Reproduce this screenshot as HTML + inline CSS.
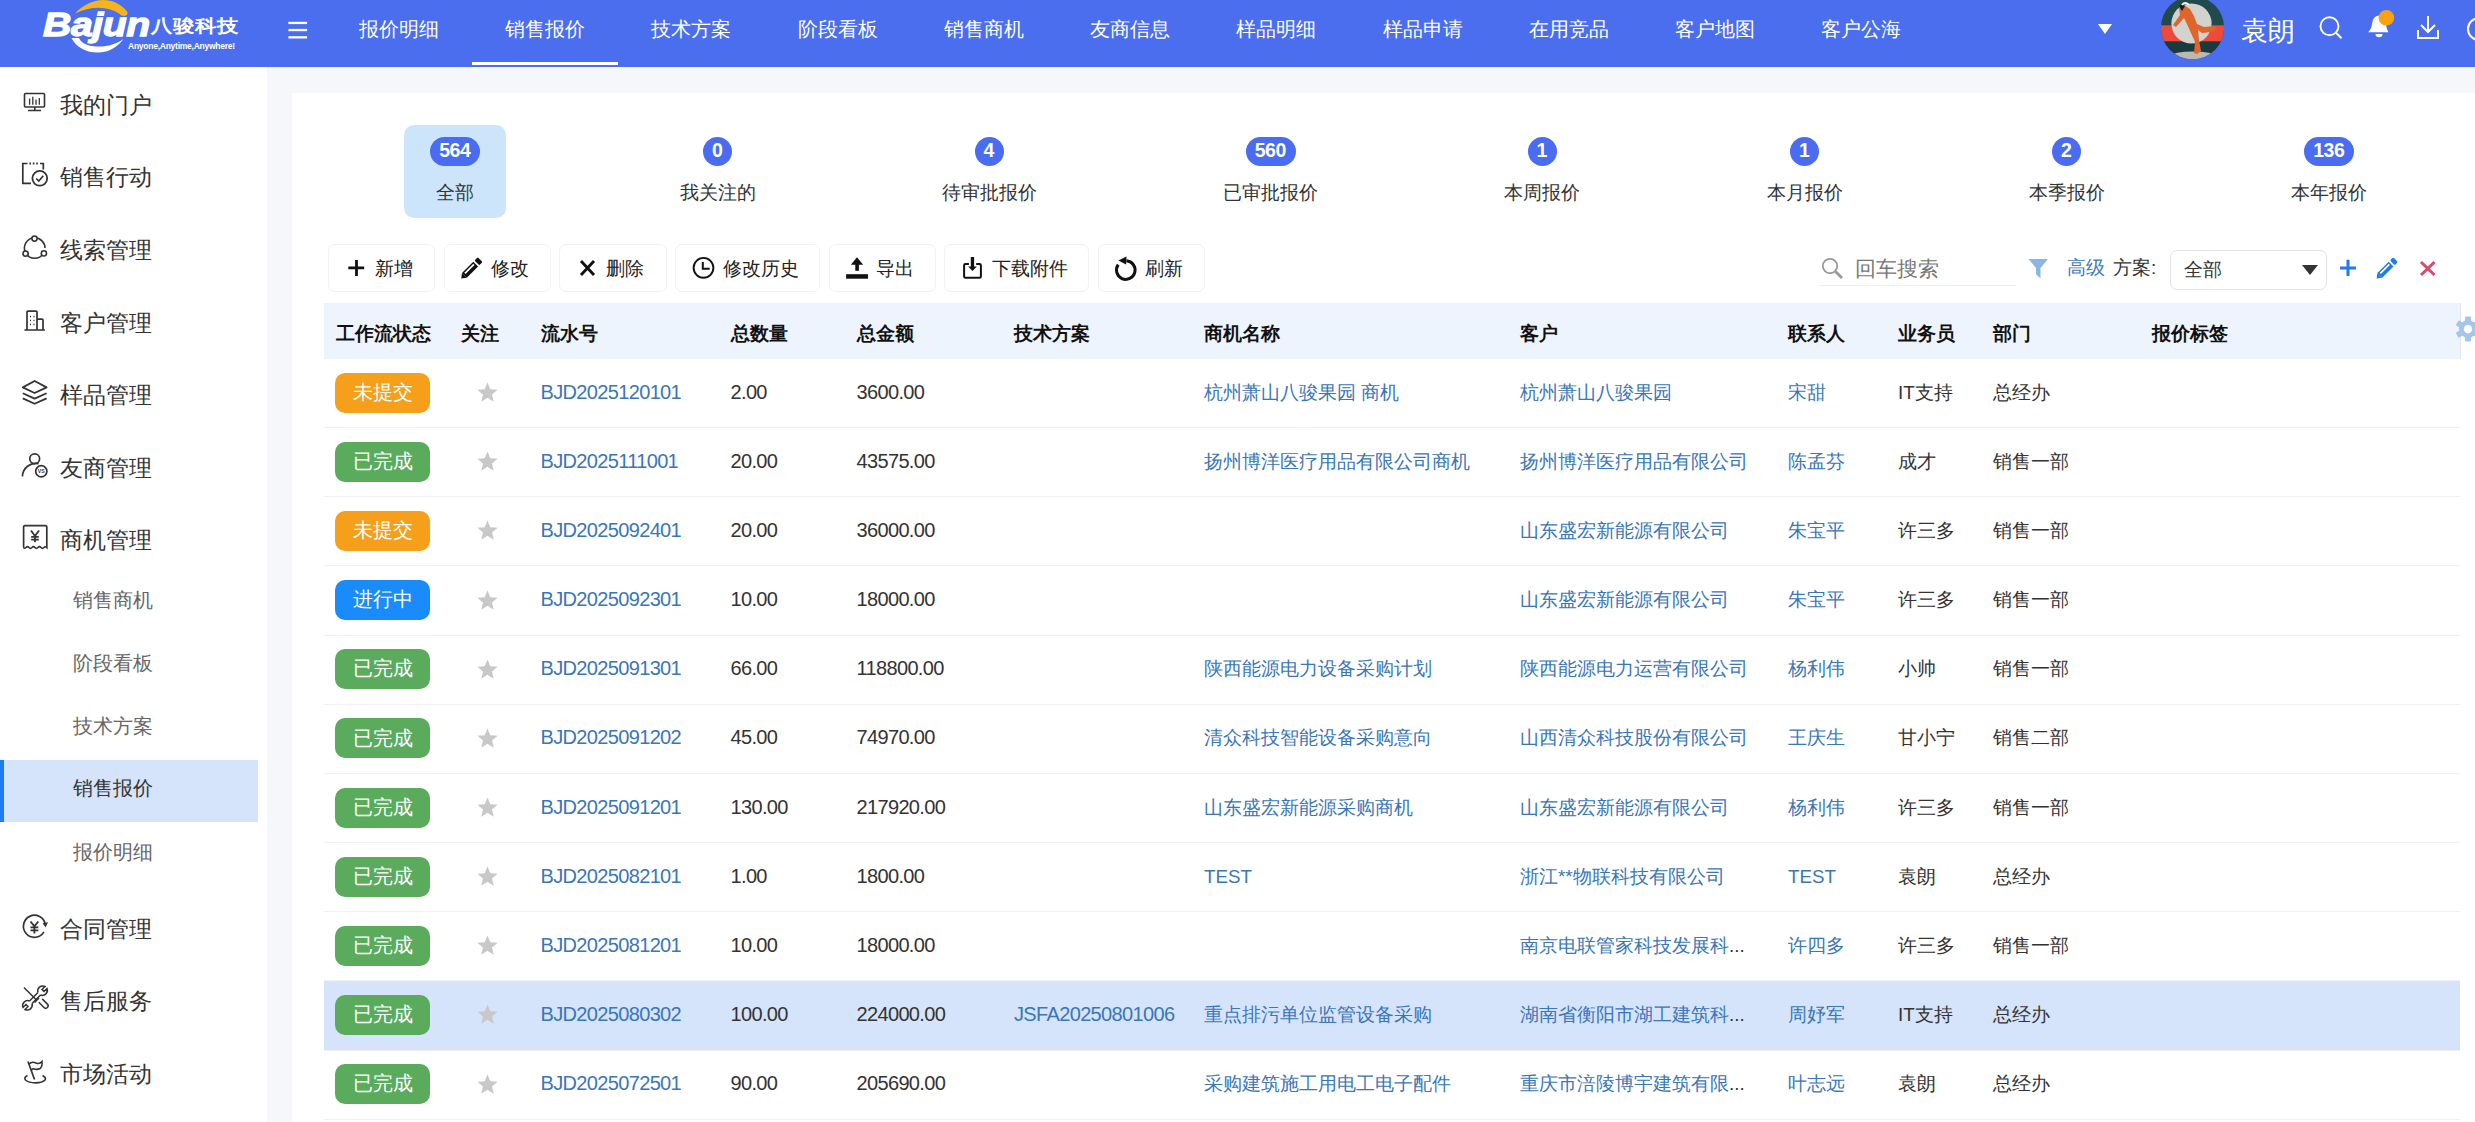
<!DOCTYPE html>
<html><head><meta charset="utf-8"><style>
*{margin:0;padding:0;box-sizing:border-box}
html,body{width:2475px;height:1122px;overflow:hidden;background:#f5f7fb;font-family:"Liberation Sans",sans-serif;color:#333}
.t{position:absolute;white-space:nowrap}
svg{position:absolute;overflow:visible}
</style></head><body>
<div class="t" style="left:0px;top:0px;width:2475px;height:67px;background:#4b6eee;"></div>
<div class="t" style="left:0px;top:67px;width:267px;height:1055px;background:#fff;"></div>
<div class="t" style="left:292px;top:93px;width:2183px;height:1029px;background:#fff;"></div>
<svg style="left:0;top:0" width="260" height="66" viewBox="0 0 260 66">
  <path d="M75 13.5 C88 -1 112 -7 127.5 12 Q128 15.5 124.5 16 Q121 16 119 13.5 C108 6.5 92 5 75 13.5 Z" fill="#f6b416"/>
  <path d="M71.5 38 C77 50 93 55 106 51.5 C113 49.5 119 45 123.5 39 C116 44 107 47 97 46.5 C87 46 81 43 79 38 Z" fill="#fff"/>
</svg>
<div class="t" id="bajun" style="left:43px;top:2px;font:italic bold 34px/44px 'Liberation Sans',sans-serif;color:#fff;-webkit-text-stroke:1.3px #fff;letter-spacing:-0.3px;transform:scaleX(1.15);transform-origin:0 0">Bajun</div>
<div class="t" style="left:151px;top:13px;font-weight:bold;font-size:21px;line-height:26px;color:#fff;transform:scale(1.04,0.88);transform-origin:0 50%">八骏科技</div>
<div class="t" style="left:128px;top:41px;font-size:8.5px;line-height:10px;color:#fff;font-weight:bold;letter-spacing:-0.25px">Anyone,Anytime,Anywhere!</div>
<svg style="left:0;top:0" width="1" height="1"><rect x="288.4" y="21.8" width="18.7" height="2.3" fill="#fff"/><rect x="288.4" y="28.9" width="18.7" height="2.3" fill="#fff"/><rect x="288.4" y="36.2" width="18.7" height="2.3" fill="#fff"/></svg>
<div class="t" style="left:325.8px;width:146px;text-align:center;top:15.0px;height:28px;line-height:28px;font-size:19.8px;color:#fff;font-weight:normal;">报价明细</div>
<div class="t" style="left:472.0px;width:146px;text-align:center;top:15.0px;height:28px;line-height:28px;font-size:19.8px;color:#fff;font-weight:normal;">销售报价</div>
<div class="t" style="left:618.3px;width:146px;text-align:center;top:15.0px;height:28px;line-height:28px;font-size:19.8px;color:#fff;font-weight:normal;">技术方案</div>
<div class="t" style="left:764.5px;width:146px;text-align:center;top:15.0px;height:28px;line-height:28px;font-size:19.8px;color:#fff;font-weight:normal;">阶段看板</div>
<div class="t" style="left:910.8px;width:146px;text-align:center;top:15.0px;height:28px;line-height:28px;font-size:19.8px;color:#fff;font-weight:normal;">销售商机</div>
<div class="t" style="left:1057.0px;width:146px;text-align:center;top:15.0px;height:28px;line-height:28px;font-size:19.8px;color:#fff;font-weight:normal;">友商信息</div>
<div class="t" style="left:1203.3px;width:146px;text-align:center;top:15.0px;height:28px;line-height:28px;font-size:19.8px;color:#fff;font-weight:normal;">样品明细</div>
<div class="t" style="left:1349.5px;width:146px;text-align:center;top:15.0px;height:28px;line-height:28px;font-size:19.8px;color:#fff;font-weight:normal;">样品申请</div>
<div class="t" style="left:1495.8px;width:146px;text-align:center;top:15.0px;height:28px;line-height:28px;font-size:19.8px;color:#fff;font-weight:normal;">在用竞品</div>
<div class="t" style="left:1642.0px;width:146px;text-align:center;top:15.0px;height:28px;line-height:28px;font-size:19.8px;color:#fff;font-weight:normal;">客户地图</div>
<div class="t" style="left:1788.3px;width:146px;text-align:center;top:15.0px;height:28px;line-height:28px;font-size:19.8px;color:#fff;font-weight:normal;">客户公海</div>
<div class="t" style="left:472px;top:62px;width:146px;height:3px;background:#fff;"></div>
<svg style="left:2096px;top:22px" width="18" height="14"><path d="M2 2 L16 2 L9 12 Z" fill="#fff"/></svg>
<svg style="left:2160px;top:-4px" width="66" height="66" viewBox="0 0 66 66">
  <defs><clipPath id="av"><circle cx="32.5" cy="31.7" r="31.6"/></clipPath></defs>
  <g clip-path="url(#av)">
    <rect x="0" y="0" width="66" height="66" fill="#214a4c"/>
    <rect x="0" y="45" width="66" height="21" fill="#1a3a3e"/>
    <rect x="0" y="29.3" width="66" height="16" fill="#ec4a3b"/>
    <circle cx="31.5" cy="27.5" r="20.1" fill="#d2d2cf"/>
    <ellipse cx="33" cy="60" rx="22" ry="4.5" fill="#b9b9b6"/>
    <path d="M19 12 L24 9 L30 13 L34 20 L37 28 L44 31 L55 30 L57 33 L52 36 L42 37 L38 34 L39 44 L41 55 L37 58 L34 57 L35 46 L31 37 L27 28 L24 22 L16 31 L13 29 L20 19 Z" fill="#e0652a"/>
    <path d="M19 10 Q22 7 25 10 L22 15 Z" fill="#1a1a1a"/>
    <path d="M22 9 Q25 5 29 9" stroke="#eee" stroke-width="2" fill="none"/>
  </g>
</svg>
<div class="t" style="left:2241px;top:12.0px;height:38px;line-height:38px;font-size:27px;color:#fff;font-weight:normal;">袁朗</div>
<svg style="left:0;top:0" width="1" height="1">
  <circle cx="2329.5" cy="26.2" r="9" stroke="#fff" stroke-width="1.9" fill="none"/>
  <path d="M2336 32.7 L2341.5 38.2" stroke="#fff" stroke-width="2"/>
  <path d="M2368 32.3 Q2371.5 29 2372 24 Q2372.5 16 2379 15.5 Q2385.5 16 2386 24 Q2386.5 29 2388.5 32.3 Z" fill="#fff"/>
  <path d="M2375.5 34 H2382.5 Q2382.5 37.3 2379 37.3 Q2375.5 37.3 2375.5 34Z" fill="#fff"/>
  <circle cx="2386.4" cy="17.8" r="7.8" fill="#f7a30f"/>
  <path d="M2428 16 V32 M2421 25 L2428 32 L2435 25" stroke="#fff" stroke-width="2" fill="none"/>
  <path d="M2418 30 V38 H2438 V30" stroke="#fff" stroke-width="2" fill="none"/>
  <circle cx="2479" cy="29" r="11" stroke="#fff" stroke-width="2" fill="none"/>
</svg>
<div class="t" style="left:0px;top:760px;width:258px;height:62px;background:#d5e4fb;"></div>
<div class="t" style="left:0px;top:760px;width:4px;height:62px;background:#1f7bf6;"></div>
<div class="t" style="left:60px;top:90.0px;height:32px;line-height:32px;font-size:22.6px;color:#333;font-weight:normal;">我的门户</div>
<div class="t" style="left:60px;top:162.0px;height:32px;line-height:32px;font-size:22.6px;color:#333;font-weight:normal;">销售行动</div>
<div class="t" style="left:60px;top:235.0px;height:32px;line-height:32px;font-size:22.6px;color:#333;font-weight:normal;">线索管理</div>
<div class="t" style="left:60px;top:308.0px;height:32px;line-height:32px;font-size:22.6px;color:#333;font-weight:normal;">客户管理</div>
<div class="t" style="left:60px;top:380.0px;height:32px;line-height:32px;font-size:22.6px;color:#333;font-weight:normal;">样品管理</div>
<div class="t" style="left:60px;top:453.0px;height:32px;line-height:32px;font-size:22.6px;color:#333;font-weight:normal;">友商管理</div>
<div class="t" style="left:60px;top:525.0px;height:32px;line-height:32px;font-size:22.6px;color:#333;font-weight:normal;">商机管理</div>
<div class="t" style="left:60px;top:914.0px;height:32px;line-height:32px;font-size:22.6px;color:#333;font-weight:normal;">合同管理</div>
<div class="t" style="left:60px;top:986.0px;height:32px;line-height:32px;font-size:22.6px;color:#333;font-weight:normal;">售后服务</div>
<div class="t" style="left:60px;top:1059.0px;height:32px;line-height:32px;font-size:22.6px;color:#333;font-weight:normal;">市场活动</div>
<div class="t" style="left:73px;top:586.0px;height:28px;line-height:28px;font-size:20px;color:#666;font-weight:normal;">销售商机</div>
<div class="t" style="left:73px;top:649.0px;height:28px;line-height:28px;font-size:20px;color:#666;font-weight:normal;">阶段看板</div>
<div class="t" style="left:73px;top:712.0px;height:28px;line-height:28px;font-size:20px;color:#666;font-weight:normal;">技术方案</div>
<div class="t" style="left:73px;top:774.0px;height:28px;line-height:28px;font-size:20px;color:#333;font-weight:normal;">销售报价</div>
<div class="t" style="left:73px;top:838.0px;height:28px;line-height:28px;font-size:20px;color:#666;font-weight:normal;">报价明细</div>
<svg style="left:0;top:0" width="60" height="1122" viewBox="0 0 60 1122" fill="none" stroke="#333" stroke-width="1.6">
  <rect x="24.5" y="93.5" width="20" height="13.5" rx="1"/>
  <path d="M28 110.5 H41 M34.8 107 V110.5"/><path d="M29.6 104.7 V98.5 M32.8 104.7 V96.8 M36 104.7 V99.5 M39.3 104.7 V98" stroke-width="1.3"/>
  <path d="M27.5 163.5 H22.8 V183.3 H31 M40 163.5 H43.3 V169.5" stroke-width="1.7"/>
  <path d="M30.2 162.6 V164.4 M33.6 162.6 V164.4 M37 162.6 V164.4" stroke-width="1.6"/>
  <circle cx="39.8" cy="178.3" r="7.4" stroke-width="1.8"/>
  <path d="M36.2 178.5 L38.8 181 L43.3 175.8" stroke-width="1.7"/>
  <path d="M34.7 237.8 A10.3 10.3 0 0 0 25.8 253.2 A10.3 10.3 0 0 0 43.6 253.2 M45 248.1 A10.3 10.3 0 0 0 34.7 237.8"/>
  <circle cx="34.5" cy="238.6" r="2.6" fill="#fff"/><circle cx="25.6" cy="253.6" r="2.6" fill="#fff"/><circle cx="43.9" cy="253.4" r="2.6" fill="#fff"/>
  <path d="M24.4 330 H45 M27 330 V312 Q27 311.2 28 311.2 H36 Q37 311.2 37 312 V330 M37 319.2 H42 Q43 319.2 43 320 V330" stroke-width="1.7"/>
  <path d="M30 316.5 h1 M33.5 316.5 h1 M30 320.5 h1 M33.5 320.5 h1 M30 324.5 h1 M33.5 324.5 h1" stroke-width="1.7"/>
  <path d="M34.6 381 L46.6 387.4 L34.6 393 L22.8 387.4 Z" stroke-width="1.8" stroke-linejoin="round"/>
  <path d="M22.8 393.2 L34.6 398.6 L46.6 393.2 M22.8 398.4 L34.6 403.8 L46.6 398.4" stroke-width="1.8" stroke-linejoin="round"/>
  <circle cx="34.7" cy="458.7" r="4.9" stroke-width="1.7"/>
  <path d="M22.4 476.4 A13.5 13.5 0 0 1 38.6 463.6" stroke-width="1.7"/>
  <circle cx="41.3" cy="471.3" r="5.6" stroke-width="1.7" fill="#fff"/>
  <text x="41.3" y="473.2" font-size="5.2" font-weight="bold" text-anchor="middle" fill="#333" stroke="none" font-family="Liberation Sans">VS</text>
  <path d="M23.6 547.5 V527 Q23.6 525.6 25 525.6 H45.4 Q46.8 525.6 46.8 527 V547.5 Q45.5 546 44 547.5 Q42.5 549 41 547.5 Q39.5 546 38 547.5 Q36.5 549 35 547.5 Q33.5 546 32 547.5 Q30.5 549 29 547.5 Q27.5 546 26 547.5 Q24.5 549 23.6 547.5" stroke-width="1.7"/>
  <path d="M31 530.5 L35 536 L39 530.5 M35 536 V542.2 M31.2 536.8 H38.8 M31.2 539.6 H38.8" stroke-width="1.8"/>
  <path d="M43.9 931.9 A11 11 0 1 1 45.3 924.6" stroke-width="1.7"/>
  <path d="M42.6 923.2 L48 922.3 L45.6 927.4 Z" fill="#333" stroke="none"/>
  <path d="M30.5 921.5 L34.4 926.3 L38.3 921.5 M34.4 926.3 V933.5 M30.5 927.3 H38.3 M30.5 930.3 H38.3" stroke-width="1.8"/>
  <path d="M24 987.5 L36.5 1000" stroke-width="1.5"/>
  <path d="M34.5 1002.5 L39 998"/>
  <path d="M38.8 1002.3 L44 1007.5 A2.4 2.4 0 0 0 47.4 1004.1 L42.2 998.9" stroke-width="1.5"/>
  <path d="M40.5 995 L32 1003.5 M38 992.5 L29.5 1001 M40.5 995 A5 5 0 0 0 47 988.5 L44 991.5 L42 989.5 L45 986.5 A5 5 0 0 0 38 992.5 M29.5 1001 A5 5 0 0 0 23 1007.5 L26 1004.5 L28 1006.5 L25 1009.5 A5 5 0 0 0 32 1003.5" stroke-width="1.5"/>
  <path d="M28 1061.5 L34.5 1079.5" stroke-width="1.7"/>
  <path d="M29 1064 Q32 1061 36 1063 Q39.5 1064.5 42 1061.5 Q42.5 1067 40 1068.5 Q37 1070 34 1069 Q32 1068.5 31.5 1070.5" stroke-width="1.6"/>
  <path d="M27.5 1075.5 Q23.5 1077.5 25.5 1080 Q28.5 1082.8 35.5 1082.8 Q42.5 1082.8 45 1080 Q46.5 1077.5 42.5 1075.5" stroke-width="1.7"/>
</svg>
<div class="t" style="left:404px;top:125px;width:102px;height:93px;background:#cce5fb;border-radius:10px"></div>
<div class="t" style="left:430.0px;top:137px;width:50px;height:29px;border-radius:15px;background:#4a6cf0;color:#fff;font-weight:bold;font-size:19.5px;line-height:27px;letter-spacing:-0.5px;text-indent:-0.5px;text-align:center">564</div>
<div class="t" style="left:305.0px;width:300px;text-align:center;top:178.5px;height:27px;line-height:27px;font-size:19.2px;color:#333;font-weight:normal;">全部</div>
<div class="t" style="left:703.0px;top:137px;width:29px;height:29px;border-radius:15px;background:#4a6cf0;color:#fff;font-weight:bold;font-size:19.5px;line-height:27px;letter-spacing:-0.5px;text-indent:-0.5px;text-align:center">0</div>
<div class="t" style="left:567.5px;width:300px;text-align:center;top:178.5px;height:27px;line-height:27px;font-size:19.2px;color:#333;font-weight:normal;">我关注的</div>
<div class="t" style="left:974.5px;top:137px;width:29px;height:29px;border-radius:15px;background:#4a6cf0;color:#fff;font-weight:bold;font-size:19.5px;line-height:27px;letter-spacing:-0.5px;text-indent:-0.5px;text-align:center">4</div>
<div class="t" style="left:839.0px;width:300px;text-align:center;top:178.5px;height:27px;line-height:27px;font-size:19.2px;color:#333;font-weight:normal;">待审批报价</div>
<div class="t" style="left:1245.5px;top:137px;width:50px;height:29px;border-radius:15px;background:#4a6cf0;color:#fff;font-weight:bold;font-size:19.5px;line-height:27px;letter-spacing:-0.5px;text-indent:-0.5px;text-align:center">560</div>
<div class="t" style="left:1120.5px;width:300px;text-align:center;top:178.5px;height:27px;line-height:27px;font-size:19.2px;color:#333;font-weight:normal;">已审批报价</div>
<div class="t" style="left:1527.5px;top:137px;width:29px;height:29px;border-radius:15px;background:#4a6cf0;color:#fff;font-weight:bold;font-size:19.5px;line-height:27px;letter-spacing:-0.5px;text-indent:-0.5px;text-align:center">1</div>
<div class="t" style="left:1392.0px;width:300px;text-align:center;top:178.5px;height:27px;line-height:27px;font-size:19.2px;color:#333;font-weight:normal;">本周报价</div>
<div class="t" style="left:1790.0px;top:137px;width:29px;height:29px;border-radius:15px;background:#4a6cf0;color:#fff;font-weight:bold;font-size:19.5px;line-height:27px;letter-spacing:-0.5px;text-indent:-0.5px;text-align:center">1</div>
<div class="t" style="left:1654.5px;width:300px;text-align:center;top:178.5px;height:27px;line-height:27px;font-size:19.2px;color:#333;font-weight:normal;">本月报价</div>
<div class="t" style="left:2052.0px;top:137px;width:29px;height:29px;border-radius:15px;background:#4a6cf0;color:#fff;font-weight:bold;font-size:19.5px;line-height:27px;letter-spacing:-0.5px;text-indent:-0.5px;text-align:center">2</div>
<div class="t" style="left:1916.5px;width:300px;text-align:center;top:178.5px;height:27px;line-height:27px;font-size:19.2px;color:#333;font-weight:normal;">本季报价</div>
<div class="t" style="left:2304.0px;top:137px;width:50px;height:29px;border-radius:15px;background:#4a6cf0;color:#fff;font-weight:bold;font-size:19.5px;line-height:27px;letter-spacing:-0.5px;text-indent:-0.5px;text-align:center">136</div>
<div class="t" style="left:2179.0px;width:300px;text-align:center;top:178.5px;height:27px;line-height:27px;font-size:19.2px;color:#333;font-weight:normal;">本年报价</div>
<div class="t" style="left:328px;top:244px;width:107px;height:48px;background:#fff;border:1px solid #f2f2f2;border-radius:7px"></div>
<div class="t" style="left:444px;top:244px;width:107px;height:48px;background:#fff;border:1px solid #f2f2f2;border-radius:7px"></div>
<div class="t" style="left:559px;top:244px;width:108px;height:48px;background:#fff;border:1px solid #f2f2f2;border-radius:7px"></div>
<div class="t" style="left:675px;top:244px;width:145px;height:48px;background:#fff;border:1px solid #f2f2f2;border-radius:7px"></div>
<div class="t" style="left:829px;top:244px;width:107px;height:48px;background:#fff;border:1px solid #f2f2f2;border-radius:7px"></div>
<div class="t" style="left:944px;top:244px;width:145px;height:48px;background:#fff;border:1px solid #f2f2f2;border-radius:7px"></div>
<div class="t" style="left:1098px;top:244px;width:107px;height:48px;background:#fff;border:1px solid #f2f2f2;border-radius:7px"></div>
<div class="t" style="left:374.5px;top:254.5px;height:27px;line-height:27px;font-size:19.2px;color:#222;font-weight:normal;">新增</div>
<div class="t" style="left:490.5px;top:254.5px;height:27px;line-height:27px;font-size:19.2px;color:#222;font-weight:normal;">修改</div>
<div class="t" style="left:606.0px;top:254.5px;height:27px;line-height:27px;font-size:19.2px;color:#222;font-weight:normal;">删除</div>
<div class="t" style="left:722.5px;top:254.5px;height:27px;line-height:27px;font-size:19.2px;color:#222;font-weight:normal;">修改历史</div>
<div class="t" style="left:876.0px;top:254.5px;height:27px;line-height:27px;font-size:19.2px;color:#222;font-weight:normal;">导出</div>
<div class="t" style="left:991.5px;top:254.5px;height:27px;line-height:27px;font-size:19.2px;color:#222;font-weight:normal;">下载附件</div>
<div class="t" style="left:1145.0px;top:254.5px;height:27px;line-height:27px;font-size:19.2px;color:#222;font-weight:normal;">刷新</div>
<svg style="left:0;top:0" width="1" height="1">
  <path d="M348.3 267.9 H364.2 M356.5 260 V276" stroke="#111" stroke-width="2.8"/>
  <g transform="translate(461.2 278.6) rotate(-45)" fill="#111">
    <path d="M0 0 L4.5 -3.4 L4.5 3.4 Z"/>
    <path d="M4.5 -3.4 H20.5 V3.4 H4.5 Z M6.3 -1.9 V-0.2 H19 V-1.9 Z" fill-rule="evenodd"/>
    <rect x="22.2" y="-3.4" width="4.6" height="6.8" rx="1"/>
  </g>
  <path d="M581 261 L594 275 M594 261 L581 275" stroke="#111" stroke-width="2.9"/>
  <circle cx="703.5" cy="267.8" r="9.9" stroke="#111" stroke-width="1.9" fill="none"/>
  <path d="M702.8 262 V268.7 H709.7" stroke="#111" stroke-width="2" fill="none"/>
  <rect x="846.1" y="274.2" width="21.9" height="4.5" fill="#111"/>
  <rect x="855.3" y="264" width="3.6" height="6.8" fill="#111"/>
  <path d="M857 257.2 L863.2 264.7 L850.9 264.7 Z" fill="#111"/>
  <path d="M968.9 264.1 H965.5 Q964.1 264.1 964.1 265.5 V276.4 Q964.1 277.8 965.5 277.8 H979.5 Q980.9 277.8 980.9 276.4 V265.5 Q980.9 264.1 979.5 264.1 H976.2" stroke="#111" stroke-width="2" fill="none"/>
  <rect x="970.8" y="257" width="3.3" height="10" fill="#111"/>
  <path d="M968.1 266.4 H976.9 L972.5 271 Z" fill="#111"/>
  <path d="M1118.2 264.7 A9.3 9.3 0 1 0 1126.4 260.8" stroke="#111" stroke-width="3" fill="none"/>
  <path d="M1118.4 260.4 L1126.5 256.6 L1126.1 264.6 Z" fill="#111"/>
</svg>
<div class="t" style="left:2170px;top:250px;width:157px;height:40px;background:#fff;border:1px solid #e3e3e3;border-radius:7px"></div>
<svg style="left:0;top:0" width="1" height="1">
  <circle cx="1830" cy="266" r="7.2" stroke="#999" stroke-width="1.8" fill="none"/>
  <path d="M1835.5 271.5 L1842 278" stroke="#999" stroke-width="2.8"/>
  <path d="M2028.5 259 H2048 L2040.5 268 V278.5 L2036 274 V268 Z" fill="#8ab6e2"/>
  <path d="M2348 259.7 V276 M2340 268 H2356" stroke="#1e7be8" stroke-width="3"/>
  <g transform="translate(2376.6 278.6) rotate(-45)" fill="#1e7be8">
    <path d="M0 0 L4.5 -3.4 L4.5 3.4 Z"/>
    <path d="M4.5 -3.4 H20.5 V3.4 H4.5 Z M6.3 -1.9 V-0.2 H19 V-1.9 Z" fill-rule="evenodd"/>
    <rect x="22.2" y="-3.4" width="4.6" height="6.8" rx="1.5"/>
  </g>
  <path d="M2421 262 L2434.5 275 M2434.5 262 L2421 275" stroke="#e0456d" stroke-width="3"/>
  <path d="M2302 265 H2318 L2310 275 Z" fill="#333"/>
</svg>
<div class="t" style="left:1855px;top:253.5px;height:29px;line-height:29px;font-size:20.5px;color:#777;font-weight:normal;">回车搜索</div>
<div class="t" style="left:1819px;top:285px;width:197px;height:1px;background:#eeeeee;"></div>
<div class="t" style="left:2066.5px;top:255.0px;height:26px;line-height:26px;font-size:18.75px;color:#3e7cbe;font-weight:normal;">高级</div>
<div class="t" style="left:2113px;top:255.0px;height:26px;line-height:26px;font-size:18.75px;color:#333;font-weight:normal;">方案:</div>
<div class="t" style="left:2184px;top:257.0px;height:26px;line-height:26px;font-size:18.75px;color:#333;font-weight:normal;">全部</div>
<div class="t" style="left:324px;top:303px;width:2136px;height:56px;background:#eef4fd;"></div>
<div class="t" style="left:2460px;top:303px;width:1px;height:56px;background:#e3e8ef;"></div>
<div class="t" style="left:336px;top:320.5px;height:26px;line-height:26px;font-size:18.75px;color:#111;font-weight:bold;">工作流状态</div>
<div class="t" style="left:461px;top:320.5px;height:26px;line-height:26px;font-size:18.75px;color:#111;font-weight:bold;">关注</div>
<div class="t" style="left:540.5px;top:320.5px;height:26px;line-height:26px;font-size:18.75px;color:#111;font-weight:bold;">流水号</div>
<div class="t" style="left:730.5px;top:320.5px;height:26px;line-height:26px;font-size:18.75px;color:#111;font-weight:bold;">总数量</div>
<div class="t" style="left:856.5px;top:320.5px;height:26px;line-height:26px;font-size:18.75px;color:#111;font-weight:bold;">总金额</div>
<div class="t" style="left:1014px;top:320.5px;height:26px;line-height:26px;font-size:18.75px;color:#111;font-weight:bold;">技术方案</div>
<div class="t" style="left:1204px;top:320.5px;height:26px;line-height:26px;font-size:18.75px;color:#111;font-weight:bold;">商机名称</div>
<div class="t" style="left:1520px;top:320.5px;height:26px;line-height:26px;font-size:18.75px;color:#111;font-weight:bold;">客户</div>
<div class="t" style="left:1788px;top:320.5px;height:26px;line-height:26px;font-size:18.75px;color:#111;font-weight:bold;">联系人</div>
<div class="t" style="left:1898px;top:320.5px;height:26px;line-height:26px;font-size:18.75px;color:#111;font-weight:bold;">业务员</div>
<div class="t" style="left:1993px;top:320.5px;height:26px;line-height:26px;font-size:18.75px;color:#111;font-weight:bold;">部门</div>
<div class="t" style="left:2151.5px;top:320.5px;height:26px;line-height:26px;font-size:18.75px;color:#111;font-weight:bold;">报价标签</div>
<svg style="left:2448px;top:310px" width="40" height="40" viewBox="0 0 40 40">
  <g fill="#a5c6ea" transform="translate(20 19)">
    <circle r="9"/>
    <rect x="-3" y="-12.5" width="6" height="25" rx="1"/>
    <rect x="-3" y="-12.5" width="6" height="25" rx="1" transform="rotate(60)"/>
    <rect x="-3" y="-12.5" width="6" height="25" rx="1" transform="rotate(120)"/>
    <circle r="4.2" fill="#fff"/>
  </g>
</svg>
<div class="t" style="left:324px;top:427px;width:2136px;height:1px;background:#f1f1f1;"></div>
<div class="t" style="left:335px;top:372.6px;width:95px;height:40px;border-radius:10px;background:#f59f1b"></div>
<div class="t" style="left:335.0px;width:95px;text-align:center;top:378.8px;height:27px;line-height:27px;font-size:19.6px;color:#fff;font-weight:normal;">未提交</div>
<svg style="left:475.5px;top:381.1px" width="23" height="23" viewBox="0 0 24 24"><path d="M12 1.5 L14.9 8.6 L22.5 9.2 L16.7 14.1 L18.5 21.6 L12 17.6 L5.5 21.6 L7.3 14.1 L1.5 9.2 L9.1 8.6 Z" fill="#c8c8c8"/></svg>
<div class="t" style="left:540.5px;top:377.6px;height:28px;line-height:28px;font-size:20px;color:#3a76b8;font-weight:normal;letter-spacing:-0.65px">BJD2025120101</div>
<div class="t" style="left:730.5px;top:377.6px;height:28px;line-height:28px;font-size:20px;color:#333;font-weight:normal;letter-spacing:-0.65px">2.00</div>
<div class="t" style="left:856.5px;top:377.6px;height:28px;line-height:28px;font-size:20px;color:#333;font-weight:normal;letter-spacing:-0.65px">3600.00</div>
<div class="t" style="left:1204px;top:379.6px;height:26px;line-height:26px;font-size:18.75px;color:#3a76b8;font-weight:normal;">杭州萧山八骏果园 商机</div>
<div class="t" style="left:1520px;top:379.6px;height:26px;line-height:26px;font-size:18.75px;color:#3a76b8;font-weight:normal;">杭州萧山八骏果园</div>
<div class="t" style="left:1788px;top:379.6px;height:26px;line-height:26px;font-size:18.75px;color:#3a76b8;font-weight:normal;">宋甜</div>
<div class="t" style="left:1898px;top:379.6px;height:26px;line-height:26px;font-size:18.75px;color:#333;font-weight:normal;">IT支持</div>
<div class="t" style="left:1993px;top:379.6px;height:26px;line-height:26px;font-size:18.75px;color:#333;font-weight:normal;">总经办</div>
<div class="t" style="left:324px;top:496px;width:2136px;height:1px;background:#f1f1f1;"></div>
<div class="t" style="left:335px;top:441.7px;width:95px;height:40px;border-radius:10px;background:#5aab5b"></div>
<div class="t" style="left:335.0px;width:95px;text-align:center;top:447.9px;height:27px;line-height:27px;font-size:19.6px;color:#fff;font-weight:normal;">已完成</div>
<svg style="left:475.5px;top:450.2px" width="23" height="23" viewBox="0 0 24 24"><path d="M12 1.5 L14.9 8.6 L22.5 9.2 L16.7 14.1 L18.5 21.6 L12 17.6 L5.5 21.6 L7.3 14.1 L1.5 9.2 L9.1 8.6 Z" fill="#c8c8c8"/></svg>
<div class="t" style="left:540.5px;top:446.7px;height:28px;line-height:28px;font-size:20px;color:#3a76b8;font-weight:normal;letter-spacing:-0.65px">BJD2025111001</div>
<div class="t" style="left:730.5px;top:446.7px;height:28px;line-height:28px;font-size:20px;color:#333;font-weight:normal;letter-spacing:-0.65px">20.00</div>
<div class="t" style="left:856.5px;top:446.7px;height:28px;line-height:28px;font-size:20px;color:#333;font-weight:normal;letter-spacing:-0.65px">43575.00</div>
<div class="t" style="left:1204px;top:448.7px;height:26px;line-height:26px;font-size:18.75px;color:#3a76b8;font-weight:normal;">扬州博洋医疗用品有限公司商机</div>
<div class="t" style="left:1520px;top:448.7px;height:26px;line-height:26px;font-size:18.75px;color:#3a76b8;font-weight:normal;">扬州博洋医疗用品有限公司</div>
<div class="t" style="left:1788px;top:448.7px;height:26px;line-height:26px;font-size:18.75px;color:#3a76b8;font-weight:normal;">陈孟芬</div>
<div class="t" style="left:1898px;top:448.7px;height:26px;line-height:26px;font-size:18.75px;color:#333;font-weight:normal;">成才</div>
<div class="t" style="left:1993px;top:448.7px;height:26px;line-height:26px;font-size:18.75px;color:#333;font-weight:normal;">销售一部</div>
<div class="t" style="left:324px;top:565px;width:2136px;height:1px;background:#f1f1f1;"></div>
<div class="t" style="left:335px;top:510.9px;width:95px;height:40px;border-radius:10px;background:#f59f1b"></div>
<div class="t" style="left:335.0px;width:95px;text-align:center;top:517.1px;height:27px;line-height:27px;font-size:19.6px;color:#fff;font-weight:normal;">未提交</div>
<svg style="left:475.5px;top:519.4px" width="23" height="23" viewBox="0 0 24 24"><path d="M12 1.5 L14.9 8.6 L22.5 9.2 L16.7 14.1 L18.5 21.6 L12 17.6 L5.5 21.6 L7.3 14.1 L1.5 9.2 L9.1 8.6 Z" fill="#c8c8c8"/></svg>
<div class="t" style="left:540.5px;top:515.9px;height:28px;line-height:28px;font-size:20px;color:#3a76b8;font-weight:normal;letter-spacing:-0.65px">BJD2025092401</div>
<div class="t" style="left:730.5px;top:515.9px;height:28px;line-height:28px;font-size:20px;color:#333;font-weight:normal;letter-spacing:-0.65px">20.00</div>
<div class="t" style="left:856.5px;top:515.9px;height:28px;line-height:28px;font-size:20px;color:#333;font-weight:normal;letter-spacing:-0.65px">36000.00</div>
<div class="t" style="left:1520px;top:517.9px;height:26px;line-height:26px;font-size:18.75px;color:#3a76b8;font-weight:normal;">山东盛宏新能源有限公司</div>
<div class="t" style="left:1788px;top:517.9px;height:26px;line-height:26px;font-size:18.75px;color:#3a76b8;font-weight:normal;">朱宝平</div>
<div class="t" style="left:1898px;top:517.9px;height:26px;line-height:26px;font-size:18.75px;color:#333;font-weight:normal;">许三多</div>
<div class="t" style="left:1993px;top:517.9px;height:26px;line-height:26px;font-size:18.75px;color:#333;font-weight:normal;">销售一部</div>
<div class="t" style="left:324px;top:635px;width:2136px;height:1px;background:#f1f1f1;"></div>
<div class="t" style="left:335px;top:580.0px;width:95px;height:40px;border-radius:10px;background:#1a8bfb"></div>
<div class="t" style="left:335.0px;width:95px;text-align:center;top:586.2px;height:27px;line-height:27px;font-size:19.6px;color:#fff;font-weight:normal;">进行中</div>
<svg style="left:475.5px;top:588.5px" width="23" height="23" viewBox="0 0 24 24"><path d="M12 1.5 L14.9 8.6 L22.5 9.2 L16.7 14.1 L18.5 21.6 L12 17.6 L5.5 21.6 L7.3 14.1 L1.5 9.2 L9.1 8.6 Z" fill="#c8c8c8"/></svg>
<div class="t" style="left:540.5px;top:585.0px;height:28px;line-height:28px;font-size:20px;color:#3a76b8;font-weight:normal;letter-spacing:-0.65px">BJD2025092301</div>
<div class="t" style="left:730.5px;top:585.0px;height:28px;line-height:28px;font-size:20px;color:#333;font-weight:normal;letter-spacing:-0.65px">10.00</div>
<div class="t" style="left:856.5px;top:585.0px;height:28px;line-height:28px;font-size:20px;color:#333;font-weight:normal;letter-spacing:-0.65px">18000.00</div>
<div class="t" style="left:1520px;top:587.0px;height:26px;line-height:26px;font-size:18.75px;color:#3a76b8;font-weight:normal;">山东盛宏新能源有限公司</div>
<div class="t" style="left:1788px;top:587.0px;height:26px;line-height:26px;font-size:18.75px;color:#3a76b8;font-weight:normal;">朱宝平</div>
<div class="t" style="left:1898px;top:587.0px;height:26px;line-height:26px;font-size:18.75px;color:#333;font-weight:normal;">许三多</div>
<div class="t" style="left:1993px;top:587.0px;height:26px;line-height:26px;font-size:18.75px;color:#333;font-weight:normal;">销售一部</div>
<div class="t" style="left:324px;top:704px;width:2136px;height:1px;background:#f1f1f1;"></div>
<div class="t" style="left:335px;top:649.2px;width:95px;height:40px;border-radius:10px;background:#5aab5b"></div>
<div class="t" style="left:335.0px;width:95px;text-align:center;top:655.4px;height:27px;line-height:27px;font-size:19.6px;color:#fff;font-weight:normal;">已完成</div>
<svg style="left:475.5px;top:657.7px" width="23" height="23" viewBox="0 0 24 24"><path d="M12 1.5 L14.9 8.6 L22.5 9.2 L16.7 14.1 L18.5 21.6 L12 17.6 L5.5 21.6 L7.3 14.1 L1.5 9.2 L9.1 8.6 Z" fill="#c8c8c8"/></svg>
<div class="t" style="left:540.5px;top:654.2px;height:28px;line-height:28px;font-size:20px;color:#3a76b8;font-weight:normal;letter-spacing:-0.65px">BJD2025091301</div>
<div class="t" style="left:730.5px;top:654.2px;height:28px;line-height:28px;font-size:20px;color:#333;font-weight:normal;letter-spacing:-0.65px">66.00</div>
<div class="t" style="left:856.5px;top:654.2px;height:28px;line-height:28px;font-size:20px;color:#333;font-weight:normal;letter-spacing:-0.65px">118800.00</div>
<div class="t" style="left:1204px;top:656.2px;height:26px;line-height:26px;font-size:18.75px;color:#3a76b8;font-weight:normal;">陕西能源电力设备采购计划</div>
<div class="t" style="left:1520px;top:656.2px;height:26px;line-height:26px;font-size:18.75px;color:#3a76b8;font-weight:normal;">陕西能源电力运营有限公司</div>
<div class="t" style="left:1788px;top:656.2px;height:26px;line-height:26px;font-size:18.75px;color:#3a76b8;font-weight:normal;">杨利伟</div>
<div class="t" style="left:1898px;top:656.2px;height:26px;line-height:26px;font-size:18.75px;color:#333;font-weight:normal;">小帅</div>
<div class="t" style="left:1993px;top:656.2px;height:26px;line-height:26px;font-size:18.75px;color:#333;font-weight:normal;">销售一部</div>
<div class="t" style="left:324px;top:773px;width:2136px;height:1px;background:#f1f1f1;"></div>
<div class="t" style="left:335px;top:718.3px;width:95px;height:40px;border-radius:10px;background:#5aab5b"></div>
<div class="t" style="left:335.0px;width:95px;text-align:center;top:724.5px;height:27px;line-height:27px;font-size:19.6px;color:#fff;font-weight:normal;">已完成</div>
<svg style="left:475.5px;top:726.8px" width="23" height="23" viewBox="0 0 24 24"><path d="M12 1.5 L14.9 8.6 L22.5 9.2 L16.7 14.1 L18.5 21.6 L12 17.6 L5.5 21.6 L7.3 14.1 L1.5 9.2 L9.1 8.6 Z" fill="#c8c8c8"/></svg>
<div class="t" style="left:540.5px;top:723.3px;height:28px;line-height:28px;font-size:20px;color:#3a76b8;font-weight:normal;letter-spacing:-0.65px">BJD2025091202</div>
<div class="t" style="left:730.5px;top:723.3px;height:28px;line-height:28px;font-size:20px;color:#333;font-weight:normal;letter-spacing:-0.65px">45.00</div>
<div class="t" style="left:856.5px;top:723.3px;height:28px;line-height:28px;font-size:20px;color:#333;font-weight:normal;letter-spacing:-0.65px">74970.00</div>
<div class="t" style="left:1204px;top:725.3px;height:26px;line-height:26px;font-size:18.75px;color:#3a76b8;font-weight:normal;">清众科技智能设备采购意向</div>
<div class="t" style="left:1520px;top:725.3px;height:26px;line-height:26px;font-size:18.75px;color:#3a76b8;font-weight:normal;">山西清众科技股份有限公司</div>
<div class="t" style="left:1788px;top:725.3px;height:26px;line-height:26px;font-size:18.75px;color:#3a76b8;font-weight:normal;">王庆生</div>
<div class="t" style="left:1898px;top:725.3px;height:26px;line-height:26px;font-size:18.75px;color:#333;font-weight:normal;">甘小宁</div>
<div class="t" style="left:1993px;top:725.3px;height:26px;line-height:26px;font-size:18.75px;color:#333;font-weight:normal;">销售二部</div>
<div class="t" style="left:324px;top:842px;width:2136px;height:1px;background:#f1f1f1;"></div>
<div class="t" style="left:335px;top:787.5px;width:95px;height:40px;border-radius:10px;background:#5aab5b"></div>
<div class="t" style="left:335.0px;width:95px;text-align:center;top:793.7px;height:27px;line-height:27px;font-size:19.6px;color:#fff;font-weight:normal;">已完成</div>
<svg style="left:475.5px;top:796.0px" width="23" height="23" viewBox="0 0 24 24"><path d="M12 1.5 L14.9 8.6 L22.5 9.2 L16.7 14.1 L18.5 21.6 L12 17.6 L5.5 21.6 L7.3 14.1 L1.5 9.2 L9.1 8.6 Z" fill="#c8c8c8"/></svg>
<div class="t" style="left:540.5px;top:792.5px;height:28px;line-height:28px;font-size:20px;color:#3a76b8;font-weight:normal;letter-spacing:-0.65px">BJD2025091201</div>
<div class="t" style="left:730.5px;top:792.5px;height:28px;line-height:28px;font-size:20px;color:#333;font-weight:normal;letter-spacing:-0.65px">130.00</div>
<div class="t" style="left:856.5px;top:792.5px;height:28px;line-height:28px;font-size:20px;color:#333;font-weight:normal;letter-spacing:-0.65px">217920.00</div>
<div class="t" style="left:1204px;top:794.5px;height:26px;line-height:26px;font-size:18.75px;color:#3a76b8;font-weight:normal;">山东盛宏新能源采购商机</div>
<div class="t" style="left:1520px;top:794.5px;height:26px;line-height:26px;font-size:18.75px;color:#3a76b8;font-weight:normal;">山东盛宏新能源有限公司</div>
<div class="t" style="left:1788px;top:794.5px;height:26px;line-height:26px;font-size:18.75px;color:#3a76b8;font-weight:normal;">杨利伟</div>
<div class="t" style="left:1898px;top:794.5px;height:26px;line-height:26px;font-size:18.75px;color:#333;font-weight:normal;">许三多</div>
<div class="t" style="left:1993px;top:794.5px;height:26px;line-height:26px;font-size:18.75px;color:#333;font-weight:normal;">销售一部</div>
<div class="t" style="left:324px;top:911px;width:2136px;height:1px;background:#f1f1f1;"></div>
<div class="t" style="left:335px;top:856.6px;width:95px;height:40px;border-radius:10px;background:#5aab5b"></div>
<div class="t" style="left:335.0px;width:95px;text-align:center;top:862.8px;height:27px;line-height:27px;font-size:19.6px;color:#fff;font-weight:normal;">已完成</div>
<svg style="left:475.5px;top:865.1px" width="23" height="23" viewBox="0 0 24 24"><path d="M12 1.5 L14.9 8.6 L22.5 9.2 L16.7 14.1 L18.5 21.6 L12 17.6 L5.5 21.6 L7.3 14.1 L1.5 9.2 L9.1 8.6 Z" fill="#c8c8c8"/></svg>
<div class="t" style="left:540.5px;top:861.6px;height:28px;line-height:28px;font-size:20px;color:#3a76b8;font-weight:normal;letter-spacing:-0.65px">BJD2025082101</div>
<div class="t" style="left:730.5px;top:861.6px;height:28px;line-height:28px;font-size:20px;color:#333;font-weight:normal;letter-spacing:-0.65px">1.00</div>
<div class="t" style="left:856.5px;top:861.6px;height:28px;line-height:28px;font-size:20px;color:#333;font-weight:normal;letter-spacing:-0.65px">1800.00</div>
<div class="t" style="left:1204px;top:863.6px;height:26px;line-height:26px;font-size:18.75px;color:#3a76b8;font-weight:normal;">TEST</div>
<div class="t" style="left:1520px;top:863.6px;height:26px;line-height:26px;font-size:18.75px;color:#3a76b8;font-weight:normal;">浙江**物联科技有限公司</div>
<div class="t" style="left:1788px;top:863.6px;height:26px;line-height:26px;font-size:18.75px;color:#3a76b8;font-weight:normal;">TEST</div>
<div class="t" style="left:1898px;top:863.6px;height:26px;line-height:26px;font-size:18.75px;color:#333;font-weight:normal;">袁朗</div>
<div class="t" style="left:1993px;top:863.6px;height:26px;line-height:26px;font-size:18.75px;color:#333;font-weight:normal;">总经办</div>
<div class="t" style="left:324px;top:980px;width:2136px;height:1px;background:#f1f1f1;"></div>
<div class="t" style="left:335px;top:925.8px;width:95px;height:40px;border-radius:10px;background:#5aab5b"></div>
<div class="t" style="left:335.0px;width:95px;text-align:center;top:932.0px;height:27px;line-height:27px;font-size:19.6px;color:#fff;font-weight:normal;">已完成</div>
<svg style="left:475.5px;top:934.3px" width="23" height="23" viewBox="0 0 24 24"><path d="M12 1.5 L14.9 8.6 L22.5 9.2 L16.7 14.1 L18.5 21.6 L12 17.6 L5.5 21.6 L7.3 14.1 L1.5 9.2 L9.1 8.6 Z" fill="#c8c8c8"/></svg>
<div class="t" style="left:540.5px;top:930.8px;height:28px;line-height:28px;font-size:20px;color:#3a76b8;font-weight:normal;letter-spacing:-0.65px">BJD2025081201</div>
<div class="t" style="left:730.5px;top:930.8px;height:28px;line-height:28px;font-size:20px;color:#333;font-weight:normal;letter-spacing:-0.65px">10.00</div>
<div class="t" style="left:856.5px;top:930.8px;height:28px;line-height:28px;font-size:20px;color:#333;font-weight:normal;letter-spacing:-0.65px">18000.00</div>
<div class="t" style="left:1520px;top:932.8px;height:26px;line-height:26px;font-size:18.75px;color:#3a76b8;font-weight:normal;">南京电联管家科技发展科<span style="color:#333">...</span></div>
<div class="t" style="left:1788px;top:932.8px;height:26px;line-height:26px;font-size:18.75px;color:#3a76b8;font-weight:normal;">许四多</div>
<div class="t" style="left:1898px;top:932.8px;height:26px;line-height:26px;font-size:18.75px;color:#333;font-weight:normal;">许三多</div>
<div class="t" style="left:1993px;top:932.8px;height:26px;line-height:26px;font-size:18.75px;color:#333;font-weight:normal;">销售一部</div>
<div class="t" style="left:324px;top:981px;width:2136px;height:70px;background:#d5e4fb;"></div>
<div class="t" style="left:324px;top:1050px;width:2136px;height:1px;background:#f1f1f1;"></div>
<div class="t" style="left:335px;top:994.9px;width:95px;height:40px;border-radius:10px;background:#5aab5b"></div>
<div class="t" style="left:335.0px;width:95px;text-align:center;top:1001.1px;height:27px;line-height:27px;font-size:19.6px;color:#fff;font-weight:normal;">已完成</div>
<svg style="left:475.5px;top:1003.4px" width="23" height="23" viewBox="0 0 24 24"><path d="M12 1.5 L14.9 8.6 L22.5 9.2 L16.7 14.1 L18.5 21.6 L12 17.6 L5.5 21.6 L7.3 14.1 L1.5 9.2 L9.1 8.6 Z" fill="#c8c8c8"/></svg>
<div class="t" style="left:540.5px;top:999.9px;height:28px;line-height:28px;font-size:20px;color:#3a76b8;font-weight:normal;letter-spacing:-0.65px">BJD2025080302</div>
<div class="t" style="left:730.5px;top:999.9px;height:28px;line-height:28px;font-size:20px;color:#333;font-weight:normal;letter-spacing:-0.65px">100.00</div>
<div class="t" style="left:856.5px;top:999.9px;height:28px;line-height:28px;font-size:20px;color:#333;font-weight:normal;letter-spacing:-0.65px">224000.00</div>
<div class="t" style="left:1014px;top:999.9px;height:28px;line-height:28px;font-size:20px;color:#3a76b8;font-weight:normal;letter-spacing:-0.65px">JSFA20250801006</div>
<div class="t" style="left:1204px;top:1001.9px;height:26px;line-height:26px;font-size:18.75px;color:#3a76b8;font-weight:normal;">重点排污单位监管设备采购</div>
<div class="t" style="left:1520px;top:1001.9px;height:26px;line-height:26px;font-size:18.75px;color:#3a76b8;font-weight:normal;">湖南省衡阳市湖工建筑科<span style="color:#333">...</span></div>
<div class="t" style="left:1788px;top:1001.9px;height:26px;line-height:26px;font-size:18.75px;color:#3a76b8;font-weight:normal;">周妤军</div>
<div class="t" style="left:1898px;top:1001.9px;height:26px;line-height:26px;font-size:18.75px;color:#333;font-weight:normal;">IT支持</div>
<div class="t" style="left:1993px;top:1001.9px;height:26px;line-height:26px;font-size:18.75px;color:#333;font-weight:normal;">总经办</div>
<div class="t" style="left:324px;top:1119px;width:2136px;height:1px;background:#f1f1f1;"></div>
<div class="t" style="left:335px;top:1064.1px;width:95px;height:40px;border-radius:10px;background:#5aab5b"></div>
<div class="t" style="left:335.0px;width:95px;text-align:center;top:1070.3px;height:27px;line-height:27px;font-size:19.6px;color:#fff;font-weight:normal;">已完成</div>
<svg style="left:475.5px;top:1072.6px" width="23" height="23" viewBox="0 0 24 24"><path d="M12 1.5 L14.9 8.6 L22.5 9.2 L16.7 14.1 L18.5 21.6 L12 17.6 L5.5 21.6 L7.3 14.1 L1.5 9.2 L9.1 8.6 Z" fill="#c8c8c8"/></svg>
<div class="t" style="left:540.5px;top:1069.1px;height:28px;line-height:28px;font-size:20px;color:#3a76b8;font-weight:normal;letter-spacing:-0.65px">BJD2025072501</div>
<div class="t" style="left:730.5px;top:1069.1px;height:28px;line-height:28px;font-size:20px;color:#333;font-weight:normal;letter-spacing:-0.65px">90.00</div>
<div class="t" style="left:856.5px;top:1069.1px;height:28px;line-height:28px;font-size:20px;color:#333;font-weight:normal;letter-spacing:-0.65px">205690.00</div>
<div class="t" style="left:1204px;top:1071.1px;height:26px;line-height:26px;font-size:18.75px;color:#3a76b8;font-weight:normal;">采购建筑施工用电工电子配件</div>
<div class="t" style="left:1520px;top:1071.1px;height:26px;line-height:26px;font-size:18.75px;color:#3a76b8;font-weight:normal;">重庆市涪陵博宇建筑有限<span style="color:#333">...</span></div>
<div class="t" style="left:1788px;top:1071.1px;height:26px;line-height:26px;font-size:18.75px;color:#3a76b8;font-weight:normal;">叶志远</div>
<div class="t" style="left:1898px;top:1071.1px;height:26px;line-height:26px;font-size:18.75px;color:#333;font-weight:normal;">袁朗</div>
<div class="t" style="left:1993px;top:1071.1px;height:26px;line-height:26px;font-size:18.75px;color:#333;font-weight:normal;">总经办</div>
</body></html>
